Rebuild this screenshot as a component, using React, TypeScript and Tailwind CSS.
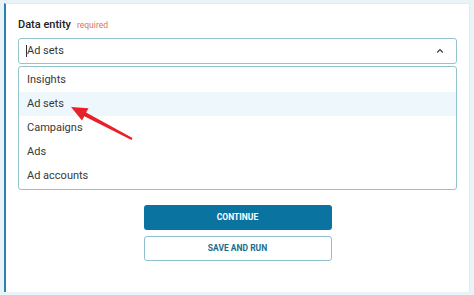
const options = ["Insights", "Ad sets", "Campaigns", "Ads", "Ad accounts"];

export default function App() {
  return (
    <div
      className="relative w-[474px] h-[295px] bg-[#eaf3f7] overflow-hidden"
      style={{ fontFamily: "Roboto, 'Noto Sans', sans-serif" }}
    >
      <div className="ml-1 mt-[3px] w-[466px] h-[289px] bg-white border-t border-t-[#e6e9eb] border-l-2 border-l-[#2a82ad] border-r border-r-[#e3eaee] pl-3 pr-3 pt-[13px] flex flex-col">
        <div className="flex items-baseline gap-[6px] h-4">
          <span className="text-[11px] font-medium text-[#222]">Data entity</span>
          <span className="text-[8.5px] text-[#e0705f]">required</span>
        </div>

        <div className="mt-[5px] h-[26px] border border-[#93c4cd] rounded-[3px] flex items-center pl-[7px] pr-3 bg-white">
          <span className="w-px h-[12px] bg-[#333]" />
          <span className="text-[11px] text-[#383838]">Ad sets</span>
          <svg className="ml-auto" width="8" height="6" viewBox="0 0 8 6">
            <path d="M1.2 4.5 L4 1.6 L6.8 4.5" fill="none" stroke="#444" strokeWidth="1.3" />
          </svg>
        </div>

        <div className="mt-[2px] border border-[#93c4cd] rounded-[3px] py-[1px] flex flex-col">
          {options.map((o) => (
            <div
              key={o}
              className={`h-6 flex items-center pl-2 text-[11px] text-[#383838] ${
                o === "Ad sets" ? "bg-[#eef8fc]" : ""
              }`}
            >
              {o}
            </div>
          ))}
        </div>

        <div className="mt-[15px] flex flex-col items-center gap-[6px]">
          <button className="w-[188px] h-[25px] rounded-[3px] bg-[#0b73a0] text-white text-[8.5px] font-bold">
            CONTINUE
          </button>
          <button className="w-[188px] h-[25px] rounded-[3px] bg-white border border-[#8dbfcc] text-[#1d6c8c] text-[8.5px] font-bold">
            SAVE AND RUN
          </button>
        </div>
      </div>

      <svg className="absolute left-0 top-0" width="474" height="295" viewBox="0 0 474 295">
        <polygon
          points="71,107 88.5,108.2 86.1,112.6 132.5,138.1 131.5,139.9 84.3,116.2 82,120.6"
          fill="#e8202a"
        />
      </svg>
    </div>
  );
}
